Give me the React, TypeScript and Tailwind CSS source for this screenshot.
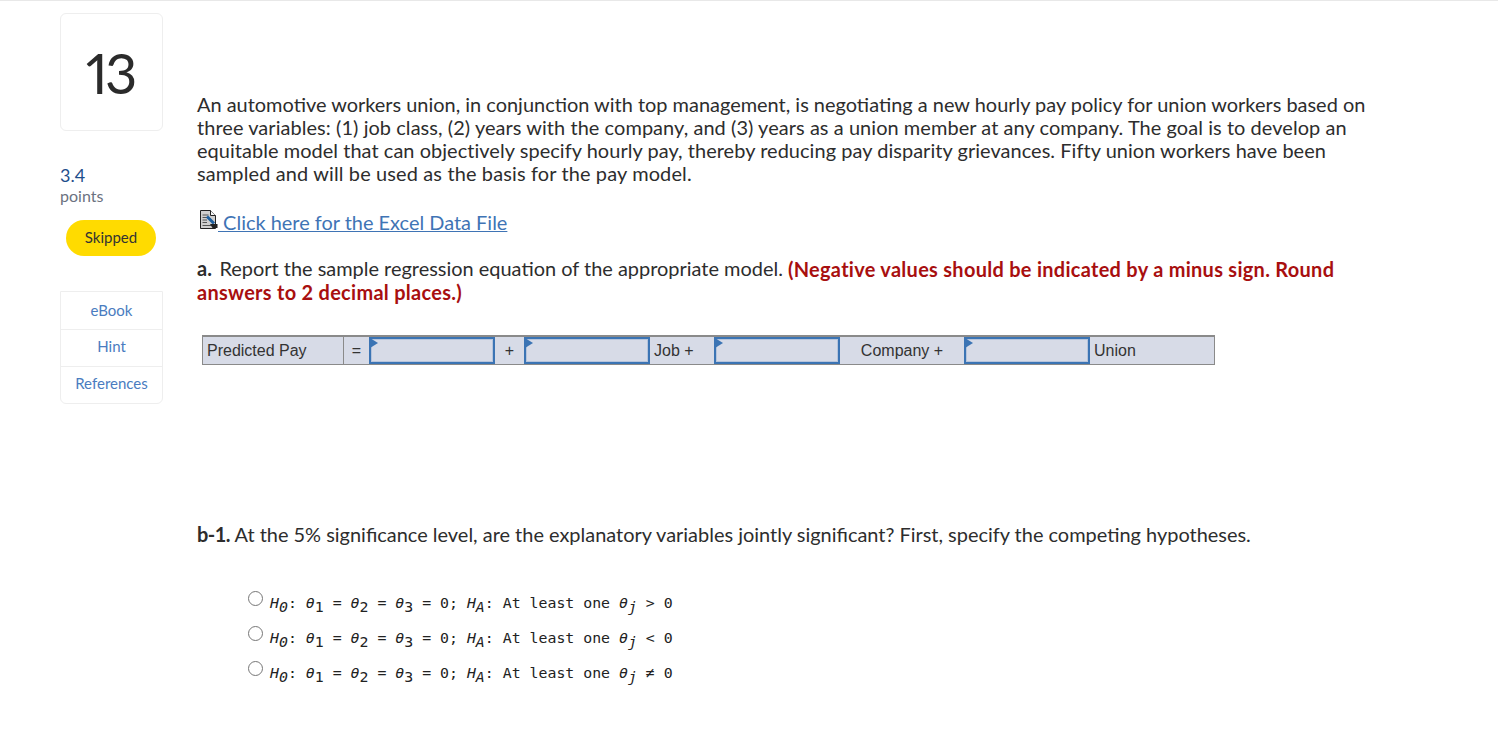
const body = "font-['Lato',sans-serif] text-[19.95px] leading-[23px] text-[#2d2d2d]";

function Blank() {
  return (
    <div className="relative h-full w-[126px] shrink-0 border-2 border-[#3b74b4] bg-[#d7dbe7] shadow-[inset_0_0_0_1px_#b6c4dc]">
      <span className="absolute -left-px -top-px h-0 w-0 border-y-[5px] border-l-[8px] border-y-transparent border-l-[#3b74b4]" />
    </div>
  );
}

function FileIcon() {
  return (
    <svg width="20" height="20" viewBox="0 0 20 20" className="mt-[-1px] block shrink-0">
      <path d="M1.5 0.5H11.5L16.5 5.5V18.5H1.5Z" fill="#cfcfcf" stroke="#222" />
      <path d="M11.5 0.5V5.5H16.5" fill="#f5f5f5" stroke="#222" />
      <path d="M3.5 5H9.5M3.5 7.5H9.5M3.5 10H8M3.5 12.5H8M3.5 15.5H12" stroke="#555" />
      <path d="M8 6.5L15 13.5" stroke="#1f5f9e" strokeWidth="3" />
      <path d="M11 14L18.5 14L18.5 18L13.5 18Z" fill="#222" />
    </svg>
  );
}

function Option({ sign }: { sign: string }) {
  const sub = "relative top-[4px]";
  return (
    <div className="flex h-[35px] items-start">
      <span className="mt-[-1px] h-[15px] w-[15px] shrink-0 rounded-full border border-[#767676] bg-white" />
      <span className="ml-[7px] mt-[-1px] whitespace-pre font-['DejaVu_Sans_Mono',monospace] text-[14.87px] leading-[24px] text-[#222]">
        <i>H</i>
        <i className={sub}>0</i>
        {": "}
        <i>θ</i>
        <span className={sub}>1</span>
        {" = "}
        <i>θ</i>
        <span className={sub}>2</span>
        {" = "}
        <i>θ</i>
        <span className={sub}>3</span>
        {" = 0; "}
        <i>H</i>
        <i className={sub}>A</i>
        {": At least one "}
        <i>θ</i>
        <i className={sub}>j</i>
        {` ${sign} 0`}
      </span>
    </div>
  );
}

export default function App() {
  return (
    <div className="min-h-[752px] border-t border-[#e8e8e8] bg-white pl-[60px] pt-3 font-['Lato',sans-serif]">
      <div className="flex">
        <aside className="w-[103px] shrink-0">
          <div className="flex h-[118px] items-center justify-center rounded-md border border-[#eeeeee] pr-[3px] pt-[2px] text-[56px] tracking-[-3px] text-[#2b2b2b] proportional-nums">
            13
          </div>
          <div className="mt-[33px] text-[18px] leading-[22px] text-[#1f4e8c]">3.4</div>
          <div className="text-[16px] leading-[20px] text-[#6b7280]">points</div>
          <div className="ml-[6px] mt-[14px] flex h-9 w-[90px] items-center justify-center rounded-full bg-[#ffdb00] pb-[1px] text-[15px] text-[#333]">
            Skipped
          </div>
          <div className="mt-[35px] divide-y divide-[#eeeeee] rounded-b-md border border-[#eeeeee] text-center text-[15px] leading-[20px] text-[#4a7cc0]">
            <div className="h-[38px] pt-[8px]">eBook</div>
            <div className="h-[37px] pt-[6px]">Hint</div>
            <div className="h-[36px] pt-[6px]">References</div>
          </div>
        </aside>

        <main className="ml-[34px] min-w-0 flex-1 pt-[80px]">
          <p className={`whitespace-nowrap ${body}`}>
            An automotive workers union, in conjunction with top management, is negotiating a new hourly pay policy for union workers based on
            <br />
            <span className="tracking-[0.07px]">three variables: (1) job class, (2) years with the company, and (3) years as a union member at any company. The goal is to develop an</span>
            <br />
            <span className="tracking-[0.055px]">equitable model that can objectively specify hourly pay, thereby reducing pay disparity grievances. Fifty union workers have been</span>
            <br />
            <span className="tracking-[0.14px]">sampled and will be used as the basis for the pay model.</span>
          </p>

          <div className={`mt-[26px] flex items-start ${body}`}>
            <span className="ml-[2px]">
              <FileIcon />
            </span>
            <a className="-ml-px whitespace-pre text-[#3f74b5] underline"> Click here for the Excel Data File</a>
          </div>

          <p className={`mt-[23px] whitespace-nowrap ${body}`}>
            <b className="mr-[2px] font-bold tracking-[0.2px]">a.</b> <span>Report the sample regression equation of the appropriate model.</span>{" "}
            <b className="relative top-px font-bold tracking-[0.3px] text-[#a80f0f]">
              (Negative values should be indicated by a minus sign. Round
              <br />
              answers to 2 decimal places.)
            </b>
          </p>

          <div className="ml-[5px] mt-[32px] flex h-[30px] w-[1013px] items-stretch border border-t-2 border-[#8a8a8a] bg-[#d7dbe7] font-['Liberation_Sans',sans-serif] text-[16px] text-[#333]">
            <div className="flex w-[141px] shrink-0 items-center border-r border-[#8a8a8a] pl-[4px]">Predicted Pay</div>
            <div className="flex w-[25px] shrink-0 items-center justify-center">=</div>
            <Blank />
            <div className="flex w-[29px] shrink-0 items-center justify-center">+</div>
            <Blank />
            <div className="flex w-[64px] shrink-0 items-center pl-[4px]">Job +</div>
            <Blank />
            <div className="flex w-[124px] shrink-0 items-center justify-center">Company +</div>
            <Blank />
            <div className="flex flex-1 items-center pl-[4px]">Union</div>
          </div>

          <p className={`mt-[158px] whitespace-nowrap ${body}`}>
            <b className="font-bold tracking-[-0.5px]">b-1.</b> At the 5% significance level, are the explanatory variables jointly significant? First, specify the competing hypotheses.
          </p>

          <div className="ml-[51px] mt-[46px]">
            <Option sign=">" />
            <Option sign="<" />
            <Option sign="≠" />
          </div>
        </main>
      </div>
    </div>
  );
}
